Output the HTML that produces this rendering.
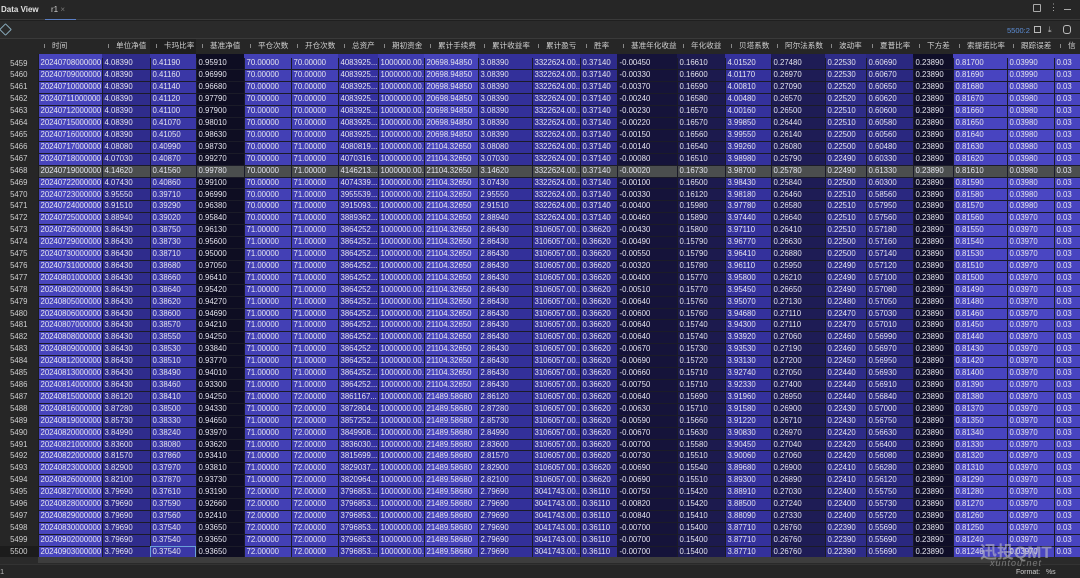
<!DOCTYPE html>
<html><head><meta charset="utf-8"><style>
*{margin:0;padding:0;box-sizing:border-box}
body{width:1080px;height:578px;overflow:hidden;background:#1f1f1f;font-family:"Liberation Sans","Noto Sans CJK SC",sans-serif;color:#e4e4ee;position:relative}
.top{position:absolute;left:0;top:0;width:1080px;height:20px;background:#262626;border-bottom:1px solid #3a3a3a}
.top .t{position:absolute;left:1px;top:5px;font-size:8px;font-weight:bold;color:#e0e0e0}
.top .tab{position:absolute;left:45px;top:0;width:31px;height:20px;border-bottom:1px solid #5b7fc4;font-size:8px;color:#ccc;padding:5px 0 0 6px}
.tb{position:absolute;left:0;top:21px;width:1080px;height:18px;background:#2a2a2a;border-bottom:1px solid #3a3a3a}
.wrap{position:absolute;left:0;top:39px;width:1080px;height:518px;overflow:hidden}
table{border-collapse:collapse;table-layout:fixed;width:1080px;font-size:7.8px}
th,td{white-space:nowrap;overflow:hidden;height:11.92px;line-height:10.8px;padding:0 0 0 2px;border-right:1px solid #1b1b28;border-bottom:1px solid #1b1b28;text-align:left;font-weight:normal}
thead th{height:15px;background:#262626;color:#cfcfcf;border:none;padding-left:6px;font-size:7.6px}
thead th i{display:inline-block;width:1px;height:4px;background:#888;margin-right:7px;vertical-align:middle}
tbody th{background:#262626;color:#cfcfcf;text-align:center;padding:0;border-right:1px solid #1d1d1d;border-bottom:none}
tr.sp td{height:4px;border:none}
tr.sp th{height:4px}
tr.hl td{background:#4b4e4e}
tr.last th{background:#1c1c1c}
.sel{outline:1px solid #6aa0d8;outline-offset:-1px}
</style></head><body>
<div class="top"><span class="t">Data View</span><span class="tab">r1 <span style="color:#777">×</span></span>
<span style="position:absolute;left:1033px;top:4px;width:8px;height:8px;border:1px solid #aaa;border-radius:1px"></span>
<span style="position:absolute;left:1049px;top:2px;font-size:9px;color:#aaa">⋮</span>
<span style="position:absolute;left:1064px;top:9px;width:7px;height:1px;background:#aaa"></span></div>
<div class="tb"><span style="position:absolute;left:1px;top:4px;width:9px;height:9px;border:1px solid #8ab;transform:rotate(45deg);border-radius:1px"></span>
<span style="position:absolute;left:1007px;top:5px;font-size:7.5px;color:#5d8ed6">5500:2</span>
<span style="position:absolute;left:1034px;top:5px;width:7px;height:7px;border:1px solid #bbb"></span>
<span style="position:absolute;left:1048px;top:4px;font-size:8px;color:#bbb">⤓</span>
<span style="position:absolute;left:1063px;top:4px;width:8px;height:9px;border:1px solid #bbb;border-radius:3px"></span></div>
<div class="wrap"><table>
<colgroup><col style="width:38px"><col style="width:64px;background:#4845bd"><col style="width:48px;background:#2f2c8c"><col style="width:46px;background:#3a37a6"><col style="width:48px;background:#0e0d22"><col style="width:47px;background:#4340b5"><col style="width:47px;background:#4340b5"><col style="width:40px;background:#3531a0"><col style="width:46px;background:#3e3bb0"><col style="width:54px;background:#4643bb"><col style="width:54px;background:#33309a"><col style="width:48px;background:#33309a"><col style="width:37px;background:#2e2b8c"><col style="width:60px;background:#15133a"><col style="width:48px;background:#1c1a4e"><col style="width:46px;background:#34319c"><col style="width:54px;background:#1e1c55"><col style="width:41px;background:#2e2c88"><col style="width:47px;background:#2a2880"><col style="width:40px;background:#0f0e28"><col style="width:54px;background:#4844c0"><col style="width:47px;background:#4a46c2"><col style="width:26px;background:#4844c0"></colgroup>
<thead><tr><th></th><th><i></i>时间</th><th><i></i>单位净值</th><th style="background:#1f1f1f"><i></i>卡玛比率</th><th><i></i>基准净值</th><th><i></i>平仓次数</th><th><i></i>开仓次数</th><th><i></i>总资产</th><th><i></i>期初资金</th><th><i></i>累计手续费</th><th><i></i>累计收益率</th><th><i></i>累计盈亏</th><th><i></i>胜率</th><th><i></i>基准年化收益</th><th><i></i>年化收益</th><th><i></i>贝塔系数</th><th><i></i>阿尔法系数</th><th><i></i>波动率</th><th><i></i>夏普比率</th><th><i></i>下方差</th><th><i></i>索提诺比率</th><th><i></i>跟踪误差</th><th><i></i>信</th></tr></thead>
<tbody>
<tr class="sp"><th></th><td></td><td></td><td></td><td></td><td></td><td></td><td></td><td></td><td></td><td></td><td></td><td></td><td></td><td></td><td></td><td></td><td></td><td></td><td></td><td></td><td></td><td></td></tr>
<tr><th>5459</th><td>20240708000000</td><td>4.08390</td><td>0.41190</td><td>0.95910</td><td>70.00000</td><td>70.00000</td><td>4083925...</td><td>1000000.00...</td><td>20698.94850</td><td>3.08390</td><td>3322624.00...</td><td>0.37140</td><td>-0.00450</td><td>0.16610</td><td>4.01520</td><td>0.27480</td><td>0.22530</td><td>0.60690</td><td>0.23890</td><td>0.81700</td><td>0.03990</td><td>0.03</td></tr>
<tr><th>5460</th><td>20240709000000</td><td>4.08390</td><td>0.41160</td><td>0.96990</td><td>70.00000</td><td>70.00000</td><td>4083925...</td><td>1000000.00...</td><td>20698.94850</td><td>3.08390</td><td>3322624.00...</td><td>0.37140</td><td>-0.00330</td><td>0.16600</td><td>4.01170</td><td>0.26970</td><td>0.22530</td><td>0.60670</td><td>0.23890</td><td>0.81690</td><td>0.03990</td><td>0.03</td></tr>
<tr><th>5461</th><td>20240710000000</td><td>4.08390</td><td>0.41140</td><td>0.96680</td><td>70.00000</td><td>70.00000</td><td>4083925...</td><td>1000000.00...</td><td>20698.94850</td><td>3.08390</td><td>3322624.00...</td><td>0.37140</td><td>-0.00370</td><td>0.16590</td><td>4.00810</td><td>0.27090</td><td>0.22520</td><td>0.60650</td><td>0.23890</td><td>0.81680</td><td>0.03980</td><td>0.03</td></tr>
<tr><th>5462</th><td>20240711000000</td><td>4.08390</td><td>0.41120</td><td>0.97790</td><td>70.00000</td><td>70.00000</td><td>4083925...</td><td>1000000.00...</td><td>20698.94850</td><td>3.08390</td><td>3322624.00...</td><td>0.37140</td><td>-0.00240</td><td>0.16580</td><td>4.00480</td><td>0.26570</td><td>0.22520</td><td>0.60620</td><td>0.23890</td><td>0.81670</td><td>0.03980</td><td>0.03</td></tr>
<tr><th>5463</th><td>20240712000000</td><td>4.08390</td><td>0.41100</td><td>0.97900</td><td>70.00000</td><td>70.00000</td><td>4083925...</td><td>1000000.00...</td><td>20698.94850</td><td>3.08390</td><td>3322624.00...</td><td>0.37140</td><td>-0.00230</td><td>0.16570</td><td>4.00160</td><td>0.26500</td><td>0.22510</td><td>0.60600</td><td>0.23890</td><td>0.81660</td><td>0.03980</td><td>0.03</td></tr>
<tr><th>5464</th><td>20240715000000</td><td>4.08390</td><td>0.41070</td><td>0.98010</td><td>70.00000</td><td>70.00000</td><td>4083925...</td><td>1000000.00...</td><td>20698.94850</td><td>3.08390</td><td>3322624.00...</td><td>0.37140</td><td>-0.00220</td><td>0.16570</td><td>3.99850</td><td>0.26440</td><td>0.22510</td><td>0.60580</td><td>0.23890</td><td>0.81650</td><td>0.03980</td><td>0.03</td></tr>
<tr><th>5465</th><td>20240716000000</td><td>4.08390</td><td>0.41050</td><td>0.98630</td><td>70.00000</td><td>70.00000</td><td>4083925...</td><td>1000000.00...</td><td>20698.94850</td><td>3.08390</td><td>3322624.00...</td><td>0.37140</td><td>-0.00150</td><td>0.16560</td><td>3.99550</td><td>0.26140</td><td>0.22500</td><td>0.60560</td><td>0.23890</td><td>0.81640</td><td>0.03980</td><td>0.03</td></tr>
<tr><th>5466</th><td>20240717000000</td><td>4.08080</td><td>0.40990</td><td>0.98730</td><td>70.00000</td><td>71.00000</td><td>4080819...</td><td>1000000.00...</td><td>21104.32650</td><td>3.08080</td><td>3322624.00...</td><td>0.37140</td><td>-0.00140</td><td>0.16540</td><td>3.99260</td><td>0.26080</td><td>0.22500</td><td>0.60480</td><td>0.23890</td><td>0.81630</td><td>0.03980</td><td>0.03</td></tr>
<tr><th>5467</th><td>20240718000000</td><td>4.07030</td><td>0.40870</td><td>0.99270</td><td>70.00000</td><td>71.00000</td><td>4070316...</td><td>1000000.00...</td><td>21104.32650</td><td>3.07030</td><td>3322624.00...</td><td>0.37140</td><td>-0.00080</td><td>0.16510</td><td>3.98980</td><td>0.25790</td><td>0.22490</td><td>0.60330</td><td>0.23890</td><td>0.81620</td><td>0.03980</td><td>0.03</td></tr>
<tr class="hl"><th>5468</th><td>20240719000000</td><td>4.14620</td><td>0.41560</td><td>0.99780</td><td>70.00000</td><td>71.00000</td><td>4146213...</td><td>1000000.00...</td><td>21104.32650</td><td>3.14620</td><td>3322624.00...</td><td>0.37140</td><td>-0.00020</td><td>0.16730</td><td>3.98700</td><td>0.25780</td><td>0.22490</td><td>0.61330</td><td>0.23890</td><td>0.81610</td><td>0.03980</td><td>0.03</td></tr>
<tr><th>5469</th><td>20240722000000</td><td>4.07430</td><td>0.40860</td><td>0.99100</td><td>70.00000</td><td>71.00000</td><td>4074339...</td><td>1000000.00...</td><td>21104.32650</td><td>3.07430</td><td>3322624.00...</td><td>0.37140</td><td>-0.00100</td><td>0.16500</td><td>3.98430</td><td>0.25840</td><td>0.22500</td><td>0.60300</td><td>0.23890</td><td>0.81590</td><td>0.03980</td><td>0.03</td></tr>
<tr><th>5470</th><td>20240723000000</td><td>3.95550</td><td>0.39710</td><td>0.96990</td><td>70.00000</td><td>71.00000</td><td>3955539...</td><td>1000000.00...</td><td>21104.32650</td><td>2.95550</td><td>3322624.00...</td><td>0.37140</td><td>-0.00330</td><td>0.16120</td><td>3.98180</td><td>0.26460</td><td>0.22510</td><td>0.58560</td><td>0.23890</td><td>0.81580</td><td>0.03980</td><td>0.03</td></tr>
<tr><th>5471</th><td>20240724000000</td><td>3.91510</td><td>0.39290</td><td>0.96380</td><td>70.00000</td><td>71.00000</td><td>3915093...</td><td>1000000.00...</td><td>21104.32650</td><td>2.91510</td><td>3322624.00...</td><td>0.37140</td><td>-0.00400</td><td>0.15980</td><td>3.97780</td><td>0.26580</td><td>0.22510</td><td>0.57950</td><td>0.23890</td><td>0.81570</td><td>0.03980</td><td>0.03</td></tr>
<tr><th>5472</th><td>20240725000000</td><td>3.88940</td><td>0.39020</td><td>0.95840</td><td>70.00000</td><td>71.00000</td><td>3889362...</td><td>1000000.00...</td><td>21104.32650</td><td>2.88940</td><td>3322624.00...</td><td>0.37140</td><td>-0.00460</td><td>0.15890</td><td>3.97440</td><td>0.26640</td><td>0.22510</td><td>0.57560</td><td>0.23890</td><td>0.81560</td><td>0.03970</td><td>0.03</td></tr>
<tr><th>5473</th><td>20240726000000</td><td>3.86430</td><td>0.38750</td><td>0.96130</td><td>71.00000</td><td>71.00000</td><td>3864252...</td><td>1000000.00...</td><td>21104.32650</td><td>2.86430</td><td>3106057.00...</td><td>0.36620</td><td>-0.00430</td><td>0.15800</td><td>3.97110</td><td>0.26410</td><td>0.22510</td><td>0.57180</td><td>0.23890</td><td>0.81550</td><td>0.03970</td><td>0.03</td></tr>
<tr><th>5474</th><td>20240729000000</td><td>3.86430</td><td>0.38730</td><td>0.95600</td><td>71.00000</td><td>71.00000</td><td>3864252...</td><td>1000000.00...</td><td>21104.32650</td><td>2.86430</td><td>3106057.00...</td><td>0.36620</td><td>-0.00490</td><td>0.15790</td><td>3.96770</td><td>0.26630</td><td>0.22500</td><td>0.57160</td><td>0.23890</td><td>0.81540</td><td>0.03970</td><td>0.03</td></tr>
<tr><th>5475</th><td>20240730000000</td><td>3.86430</td><td>0.38710</td><td>0.95000</td><td>71.00000</td><td>71.00000</td><td>3864252...</td><td>1000000.00...</td><td>21104.32650</td><td>2.86430</td><td>3106057.00...</td><td>0.36620</td><td>-0.00550</td><td>0.15790</td><td>3.96410</td><td>0.26880</td><td>0.22500</td><td>0.57140</td><td>0.23890</td><td>0.81530</td><td>0.03970</td><td>0.03</td></tr>
<tr><th>5476</th><td>20240731000000</td><td>3.86430</td><td>0.38680</td><td>0.97050</td><td>71.00000</td><td>71.00000</td><td>3864252...</td><td>1000000.00...</td><td>21104.32650</td><td>2.86430</td><td>3106057.00...</td><td>0.36620</td><td>-0.00320</td><td>0.15780</td><td>3.96110</td><td>0.25950</td><td>0.22490</td><td>0.57120</td><td>0.23890</td><td>0.81510</td><td>0.03970</td><td>0.03</td></tr>
<tr><th>5477</th><td>20240801000000</td><td>3.86430</td><td>0.38660</td><td>0.96410</td><td>71.00000</td><td>71.00000</td><td>3864252...</td><td>1000000.00...</td><td>21104.32650</td><td>2.86430</td><td>3106057.00...</td><td>0.36620</td><td>-0.00400</td><td>0.15770</td><td>3.95800</td><td>0.26210</td><td>0.22490</td><td>0.57100</td><td>0.23890</td><td>0.81500</td><td>0.03970</td><td>0.03</td></tr>
<tr><th>5478</th><td>20240802000000</td><td>3.86430</td><td>0.38640</td><td>0.95420</td><td>71.00000</td><td>71.00000</td><td>3864252...</td><td>1000000.00...</td><td>21104.32650</td><td>2.86430</td><td>3106057.00...</td><td>0.36620</td><td>-0.00510</td><td>0.15770</td><td>3.95450</td><td>0.26650</td><td>0.22490</td><td>0.57080</td><td>0.23890</td><td>0.81490</td><td>0.03970</td><td>0.03</td></tr>
<tr><th>5479</th><td>20240805000000</td><td>3.86430</td><td>0.38620</td><td>0.94270</td><td>71.00000</td><td>71.00000</td><td>3864252...</td><td>1000000.00...</td><td>21104.32650</td><td>2.86430</td><td>3106057.00...</td><td>0.36620</td><td>-0.00640</td><td>0.15760</td><td>3.95070</td><td>0.27130</td><td>0.22480</td><td>0.57050</td><td>0.23890</td><td>0.81480</td><td>0.03970</td><td>0.03</td></tr>
<tr><th>5480</th><td>20240806000000</td><td>3.86430</td><td>0.38600</td><td>0.94690</td><td>71.00000</td><td>71.00000</td><td>3864252...</td><td>1000000.00...</td><td>21104.32650</td><td>2.86430</td><td>3106057.00...</td><td>0.36620</td><td>-0.00600</td><td>0.15760</td><td>3.94680</td><td>0.27110</td><td>0.22470</td><td>0.57030</td><td>0.23890</td><td>0.81460</td><td>0.03970</td><td>0.03</td></tr>
<tr><th>5481</th><td>20240807000000</td><td>3.86430</td><td>0.38570</td><td>0.94210</td><td>71.00000</td><td>71.00000</td><td>3864252...</td><td>1000000.00...</td><td>21104.32650</td><td>2.86430</td><td>3106057.00...</td><td>0.36620</td><td>-0.00640</td><td>0.15740</td><td>3.94300</td><td>0.27110</td><td>0.22470</td><td>0.57010</td><td>0.23890</td><td>0.81450</td><td>0.03970</td><td>0.03</td></tr>
<tr><th>5482</th><td>20240808000000</td><td>3.86430</td><td>0.38550</td><td>0.94250</td><td>71.00000</td><td>71.00000</td><td>3864252...</td><td>1000000.00...</td><td>21104.32650</td><td>2.86430</td><td>3106057.00...</td><td>0.36620</td><td>-0.00640</td><td>0.15740</td><td>3.93920</td><td>0.27060</td><td>0.22460</td><td>0.56990</td><td>0.23890</td><td>0.81440</td><td>0.03970</td><td>0.03</td></tr>
<tr><th>5483</th><td>20240809000000</td><td>3.86430</td><td>0.38530</td><td>0.93840</td><td>71.00000</td><td>71.00000</td><td>3864252...</td><td>1000000.00...</td><td>21104.32650</td><td>2.86430</td><td>3106057.00...</td><td>0.36620</td><td>-0.00670</td><td>0.15730</td><td>3.93530</td><td>0.27190</td><td>0.22460</td><td>0.56970</td><td>0.23890</td><td>0.81430</td><td>0.03970</td><td>0.03</td></tr>
<tr><th>5484</th><td>20240812000000</td><td>3.86430</td><td>0.38510</td><td>0.93770</td><td>71.00000</td><td>71.00000</td><td>3864252...</td><td>1000000.00...</td><td>21104.32650</td><td>2.86430</td><td>3106057.00...</td><td>0.36620</td><td>-0.00690</td><td>0.15720</td><td>3.93130</td><td>0.27200</td><td>0.22450</td><td>0.56950</td><td>0.23890</td><td>0.81420</td><td>0.03970</td><td>0.03</td></tr>
<tr><th>5485</th><td>20240813000000</td><td>3.86430</td><td>0.38490</td><td>0.94010</td><td>71.00000</td><td>71.00000</td><td>3864252...</td><td>1000000.00...</td><td>21104.32650</td><td>2.86430</td><td>3106057.00...</td><td>0.36620</td><td>-0.00660</td><td>0.15710</td><td>3.92740</td><td>0.27050</td><td>0.22440</td><td>0.56930</td><td>0.23890</td><td>0.81400</td><td>0.03970</td><td>0.03</td></tr>
<tr><th>5486</th><td>20240814000000</td><td>3.86430</td><td>0.38460</td><td>0.93300</td><td>71.00000</td><td>71.00000</td><td>3864252...</td><td>1000000.00...</td><td>21104.32650</td><td>2.86430</td><td>3106057.00...</td><td>0.36620</td><td>-0.00750</td><td>0.15710</td><td>3.92330</td><td>0.27400</td><td>0.22440</td><td>0.56910</td><td>0.23890</td><td>0.81390</td><td>0.03970</td><td>0.03</td></tr>
<tr><th>5487</th><td>20240815000000</td><td>3.86120</td><td>0.38410</td><td>0.94250</td><td>71.00000</td><td>72.00000</td><td>3861167...</td><td>1000000.00...</td><td>21489.58680</td><td>2.86120</td><td>3106057.00...</td><td>0.36620</td><td>-0.00640</td><td>0.15690</td><td>3.91960</td><td>0.26950</td><td>0.22440</td><td>0.56840</td><td>0.23890</td><td>0.81380</td><td>0.03970</td><td>0.03</td></tr>
<tr><th>5488</th><td>20240816000000</td><td>3.87280</td><td>0.38500</td><td>0.94330</td><td>71.00000</td><td>72.00000</td><td>3872804...</td><td>1000000.00...</td><td>21489.58680</td><td>2.87280</td><td>3106057.00...</td><td>0.36620</td><td>-0.00630</td><td>0.15710</td><td>3.91580</td><td>0.26900</td><td>0.22430</td><td>0.57000</td><td>0.23890</td><td>0.81370</td><td>0.03970</td><td>0.03</td></tr>
<tr><th>5489</th><td>20240819000000</td><td>3.85730</td><td>0.38330</td><td>0.94650</td><td>71.00000</td><td>72.00000</td><td>3857252...</td><td>1000000.00...</td><td>21489.58680</td><td>2.85730</td><td>3106057.00...</td><td>0.36620</td><td>-0.00590</td><td>0.15660</td><td>3.91220</td><td>0.26710</td><td>0.22430</td><td>0.56750</td><td>0.23890</td><td>0.81350</td><td>0.03970</td><td>0.03</td></tr>
<tr><th>5490</th><td>20240820000000</td><td>3.84990</td><td>0.38240</td><td>0.93970</td><td>71.00000</td><td>72.00000</td><td>3849908...</td><td>1000000.00...</td><td>21489.58680</td><td>2.84990</td><td>3106057.00...</td><td>0.36620</td><td>-0.00670</td><td>0.15630</td><td>3.90830</td><td>0.26970</td><td>0.22420</td><td>0.56630</td><td>0.23890</td><td>0.81340</td><td>0.03970</td><td>0.03</td></tr>
<tr><th>5491</th><td>20240821000000</td><td>3.83600</td><td>0.38080</td><td>0.93620</td><td>71.00000</td><td>72.00000</td><td>3836030...</td><td>1000000.00...</td><td>21489.58680</td><td>2.83600</td><td>3106057.00...</td><td>0.36620</td><td>-0.00700</td><td>0.15580</td><td>3.90450</td><td>0.27040</td><td>0.22420</td><td>0.56400</td><td>0.23890</td><td>0.81330</td><td>0.03970</td><td>0.03</td></tr>
<tr><th>5492</th><td>20240822000000</td><td>3.81570</td><td>0.37860</td><td>0.93410</td><td>71.00000</td><td>72.00000</td><td>3815699...</td><td>1000000.00...</td><td>21489.58680</td><td>2.81570</td><td>3106057.00...</td><td>0.36620</td><td>-0.00730</td><td>0.15510</td><td>3.90060</td><td>0.27060</td><td>0.22420</td><td>0.56080</td><td>0.23890</td><td>0.81320</td><td>0.03970</td><td>0.03</td></tr>
<tr><th>5493</th><td>20240823000000</td><td>3.82900</td><td>0.37970</td><td>0.93810</td><td>71.00000</td><td>72.00000</td><td>3829037...</td><td>1000000.00...</td><td>21489.58680</td><td>2.82900</td><td>3106057.00...</td><td>0.36620</td><td>-0.00690</td><td>0.15540</td><td>3.89680</td><td>0.26900</td><td>0.22410</td><td>0.56280</td><td>0.23890</td><td>0.81310</td><td>0.03970</td><td>0.03</td></tr>
<tr><th>5494</th><td>20240826000000</td><td>3.82100</td><td>0.37870</td><td>0.93730</td><td>71.00000</td><td>72.00000</td><td>3820964...</td><td>1000000.00...</td><td>21489.58680</td><td>2.82100</td><td>3106057.00...</td><td>0.36620</td><td>-0.00690</td><td>0.15510</td><td>3.89300</td><td>0.26890</td><td>0.22410</td><td>0.56120</td><td>0.23890</td><td>0.81290</td><td>0.03970</td><td>0.03</td></tr>
<tr><th>5495</th><td>20240827000000</td><td>3.79690</td><td>0.37610</td><td>0.93190</td><td>72.00000</td><td>72.00000</td><td>3796853...</td><td>1000000.00...</td><td>21489.58680</td><td>2.79690</td><td>3041743.00...</td><td>0.36110</td><td>-0.00750</td><td>0.15420</td><td>3.88910</td><td>0.27030</td><td>0.22400</td><td>0.55750</td><td>0.23890</td><td>0.81280</td><td>0.03970</td><td>0.03</td></tr>
<tr><th>5496</th><td>20240828000000</td><td>3.79690</td><td>0.37590</td><td>0.92660</td><td>72.00000</td><td>72.00000</td><td>3796853...</td><td>1000000.00...</td><td>21489.58680</td><td>2.79690</td><td>3041743.00...</td><td>0.36110</td><td>-0.00820</td><td>0.15420</td><td>3.88500</td><td>0.27240</td><td>0.22400</td><td>0.55730</td><td>0.23890</td><td>0.81270</td><td>0.03970</td><td>0.03</td></tr>
<tr><th>5497</th><td>20240829000000</td><td>3.79690</td><td>0.37560</td><td>0.92410</td><td>72.00000</td><td>72.00000</td><td>3796853...</td><td>1000000.00...</td><td>21489.58680</td><td>2.79690</td><td>3041743.00...</td><td>0.36110</td><td>-0.00840</td><td>0.15410</td><td>3.88090</td><td>0.27330</td><td>0.22400</td><td>0.55720</td><td>0.23890</td><td>0.81260</td><td>0.03970</td><td>0.03</td></tr>
<tr><th>5498</th><td>20240830000000</td><td>3.79690</td><td>0.37540</td><td>0.93650</td><td>72.00000</td><td>72.00000</td><td>3796853...</td><td>1000000.00...</td><td>21489.58680</td><td>2.79690</td><td>3041743.00...</td><td>0.36110</td><td>-0.00700</td><td>0.15400</td><td>3.87710</td><td>0.26760</td><td>0.22390</td><td>0.55690</td><td>0.23890</td><td>0.81250</td><td>0.03970</td><td>0.03</td></tr>
<tr><th>5499</th><td>20240902000000</td><td>3.79690</td><td>0.37540</td><td>0.93650</td><td>72.00000</td><td>72.00000</td><td>3796853...</td><td>1000000.00...</td><td>21489.58680</td><td>2.79690</td><td>3041743.00...</td><td>0.36110</td><td>-0.00700</td><td>0.15400</td><td>3.87710</td><td>0.26760</td><td>0.22390</td><td>0.55690</td><td>0.23890</td><td>0.81240</td><td>0.03970</td><td>0.03</td></tr>
<tr class="last"><th>5500</th><td>20240903000000</td><td>3.79690</td><td class="sel">0.37540</td><td>0.93650</td><td>72.00000</td><td>72.00000</td><td>3796853...</td><td>1000000.00...</td><td>21489.58680</td><td>2.79690</td><td>3041743.00...</td><td>0.36110</td><td>-0.00700</td><td>0.15400</td><td>3.87710</td><td>0.26760</td><td>0.22390</td><td>0.55690</td><td>0.23890</td><td>0.81240</td><td>0.03970</td><td>0.03</td></tr>
</tbody></table></div>
<div style="position:absolute;left:0;top:557px;width:1080px;height:7px;background:#2a2a2a"></div>
<div style="position:absolute;left:38px;top:557px;width:960px;height:6px;background:#3d3d3d"></div>
<div style="position:absolute;left:0;top:564px;width:1080px;height:14px;background:#262626;border-top:1px solid #333"></div>
<div style="position:absolute;left:0;top:567px;font-size:7.5px;color:#bbb">1</div>
<div style="position:absolute;left:1016px;top:569px;font-size:7px;color:#ccc">Format: &nbsp; %s</div>
<div style="position:absolute;left:980px;top:538px;font-size:17px;font-weight:bold;color:rgba(200,200,200,0.55);letter-spacing:0">迅投QMT</div>
<div style="position:absolute;left:990px;top:558px;font-size:9px;font-style:italic;color:rgba(200,200,200,0.5);letter-spacing:1px">xuntou.net</div>
</body></html>
